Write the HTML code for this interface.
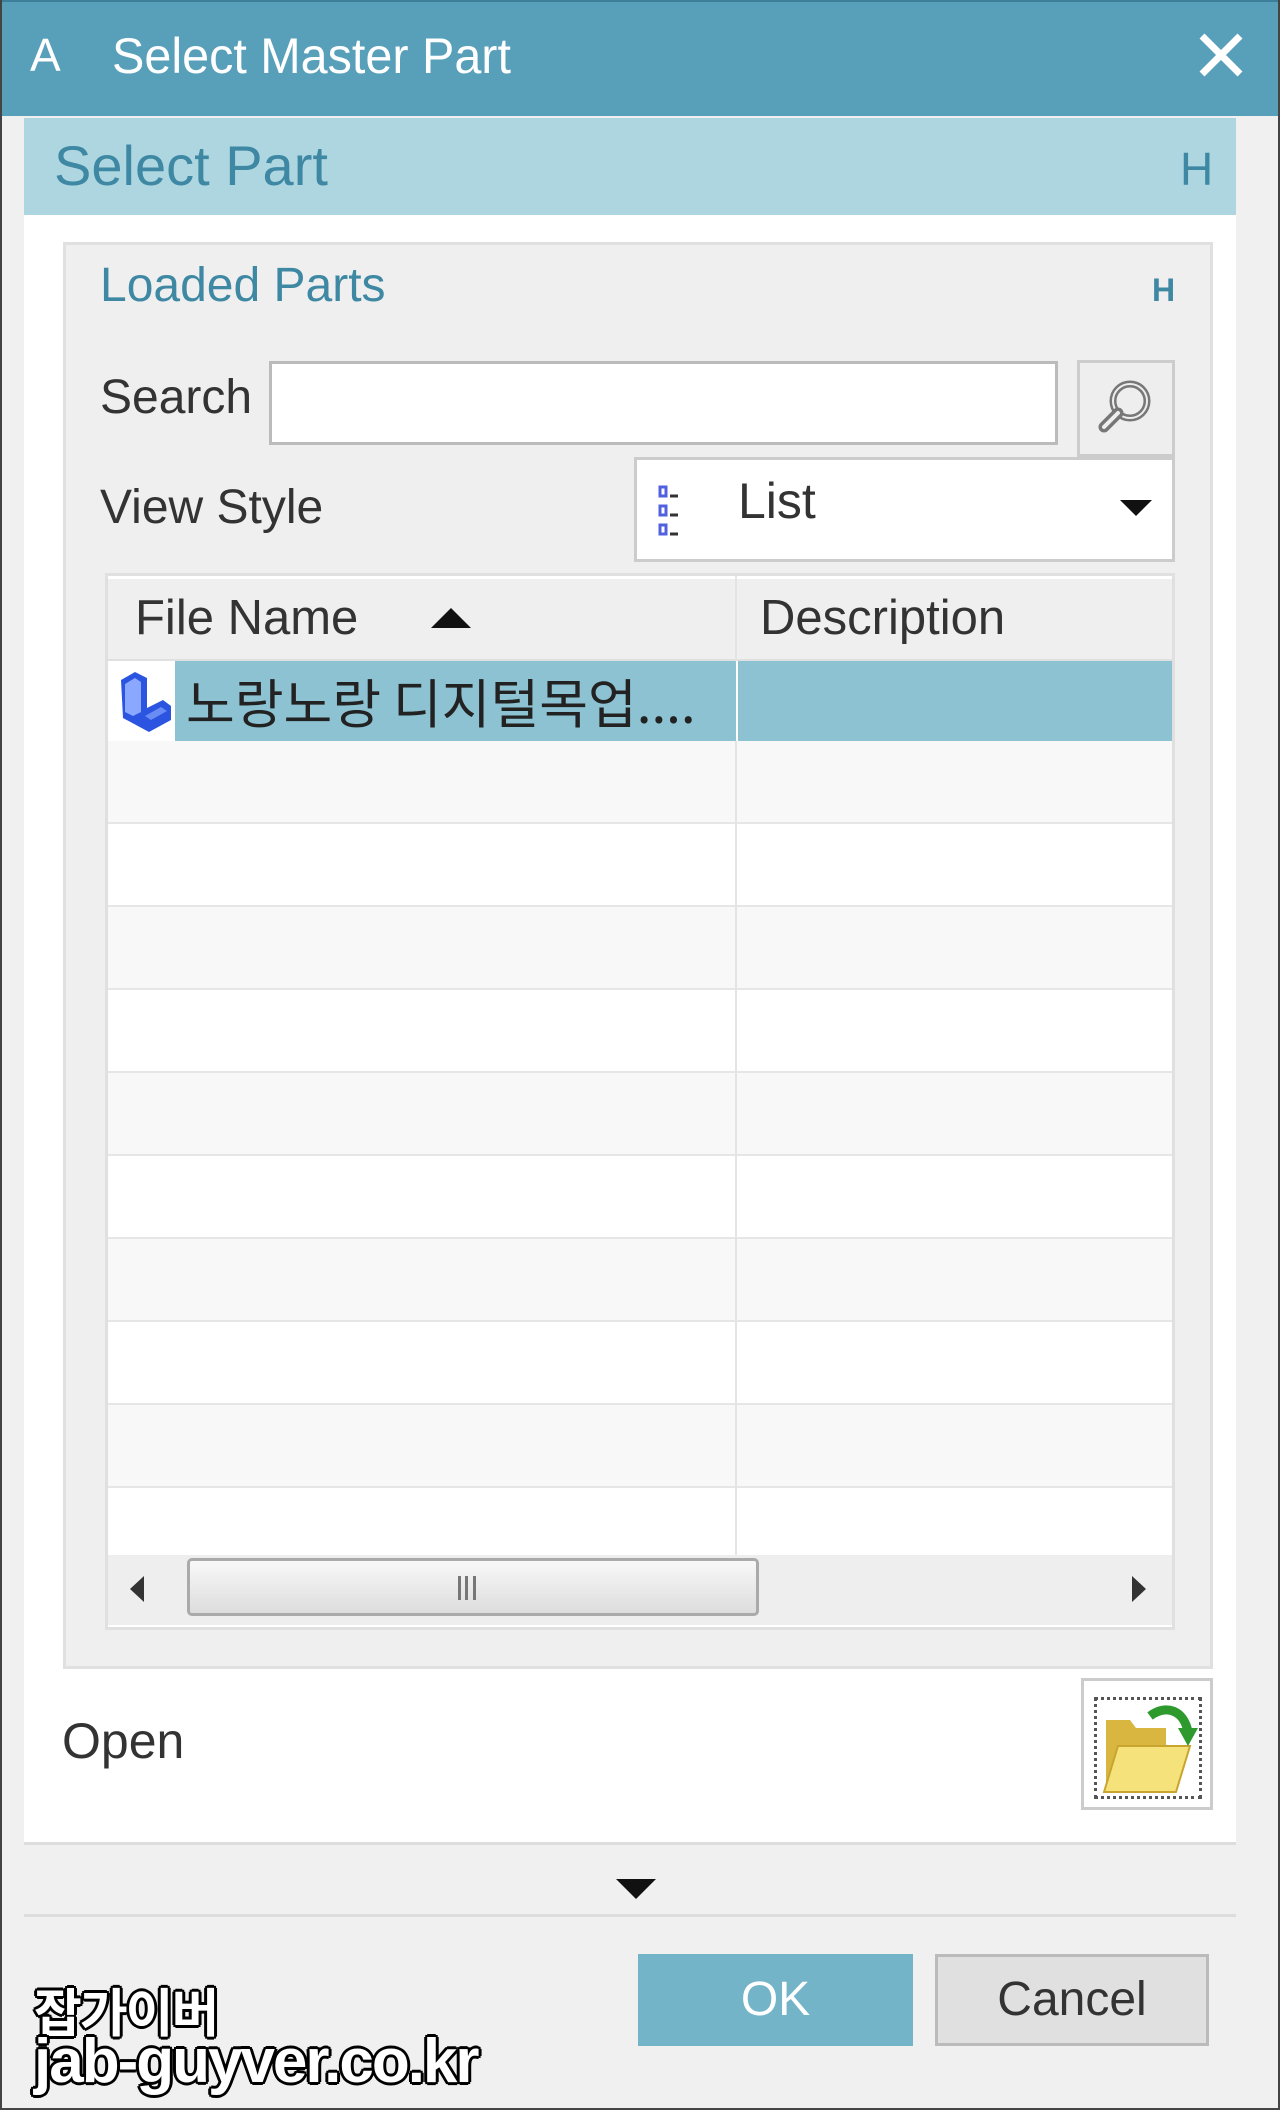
<!DOCTYPE html>
<html><head><meta charset="utf-8"><style>
*{margin:0;padding:0;box-sizing:border-box}
body{width:1280px;height:2110px;overflow:hidden;background:#f0f0f0;font-family:"Liberation Sans","Noto Sans CJK KR",sans-serif;position:relative}
.a{position:absolute}
.frame{left:0;top:0;width:1280px;height:2110px;border:2px solid #444;border-top:none}
.title{left:0;top:0;width:1280px;height:116px;background:#589fba;border-top:2px solid #3d7f99}
.t{color:#fff;font-size:50px}
.rows div{position:absolute;left:0;width:1065px;height:83px;border-bottom:2px solid #e6e6e6}
</style></head><body>
<div class="a title"></div>
<div class="a t" style="left:30px;top:28px;font-size:46px">A</div>
<div class="a t" style="left:112px;top:27px;transform:scaleX(0.97);transform-origin:left">Select Master Part</div>
<svg class="a" style="left:1196px;top:30px" width="50" height="50"><path d="M6 6L44 44M44 6L6 44" stroke="#fff" stroke-width="7"/></svg>
<div class="a" style="left:24px;top:118px;width:1212px;height:97px;background:#aed6e0"></div>
<div class="a" style="left:54px;top:133px;font-size:56px;color:#3e88a3">Select Part</div>
<div class="a" style="left:1180px;top:142px;font-size:46px;color:#3e88a3">H</div>
<div class="a" style="left:24px;top:215px;width:1212px;height:1630px;background:#fff;border-bottom:3px solid #ddd"></div>
<div class="a" style="left:63px;top:242px;width:1150px;height:1427px;background:#efefef;border:3px solid #e0e0e0"></div>
<div class="a" style="left:100px;top:258px;font-size:48px;color:#3e88a3">Loaded Parts</div>
<div class="a" style="left:1152px;top:272px;font-size:32px;color:#3e88a3;font-weight:bold">H</div>
<div class="a" style="left:100px;top:370px;font-size:48px;color:#333">Search</div>
<div class="a" style="left:269px;top:361px;width:789px;height:84px;background:#fff;border:3px solid #bbb"></div>
<div class="a" style="left:1077px;top:360px;width:98px;height:97px;background:#eee;border:3px solid #ccc"></div>
<svg class="a" style="left:1090px;top:375px" width="70" height="70"><circle cx="40" cy="26" r="17" fill="none" stroke="#777" stroke-width="7"/><circle cx="40" cy="26" r="17" fill="none" stroke="#eee" stroke-width="2"/><path d="M28 38L14 52" stroke="#777" stroke-width="11" stroke-linecap="round"/><path d="M28 38L14 52" stroke="#eee" stroke-width="4" stroke-linecap="round"/></svg>
<div class="a" style="left:100px;top:480px;font-size:48px;color:#333">View Style</div>
<div class="a" style="left:634px;top:457px;width:541px;height:105px;background:#fff;border:3px solid #ccc"></div>
<svg class="a" style="left:658px;top:484px" width="32" height="56"><g fill="none" stroke="#5060e0" stroke-width="3"><rect x="2" y="3" width="6" height="9"/><rect x="2" y="22" width="6" height="9"/><rect x="2" y="41" width="6" height="9"/></g><g stroke="#333" stroke-width="3"><path d="M12 12h8M12 31h8M12 50h8"/></g></svg>
<div class="a" style="left:738px;top:472px;font-size:50px;color:#333">List</div>
<svg class="a" style="left:1120px;top:498px" width="32" height="20"><path d="M0 2h32L16 18z" fill="#111"/></svg>
<div class="a" style="left:105px;top:573px;width:1070px;height:1057px;background:#fff;border:3px solid #e0e0e0;overflow:hidden">
 <div class="a" style="left:0;top:3px;width:1070px;height:82px;background:#efefef;border-bottom:2px solid #e0e0e0"></div>
 <div class="a" style="left:27px;top:14px;font-size:49px;color:#333">File Name</div>
 <svg class="a" style="left:323px;top:30px" width="40" height="24"><path d="M0 22h40L20 2z" fill="#111"/></svg>
 <div class="a" style="left:627px;top:0;width:2px;height:980px;background:#e4e4e4"></div>
 <div class="a" style="left:652px;top:14px;font-size:49px;color:#333">Description</div>
 <div class="a" style="left:67px;top:85px;width:1000px;height:80px;background:#8cc2d2"></div>
 <div class="a" style="left:628px;top:85px;width:2px;height:80px;background:#fff"></div>
 <svg class="a" style="left:5px;top:94px" width="60" height="62"><path d="M8 10l14-8 12 6v30l16-8 8 6v14l-22 12-26-14z" fill="#2b55e0"/><path d="M12 14l10-6 6 4v30l-8 4-8-4z" fill="#8aa8ff"/><path d="M32 46l16-9 6 4-16 9z" fill="#6a8cf5"/></svg>
 <div class="a" style="left:78px;top:92px;font-size:53px;color:#222;font-family:'Noto Sans CJK KR',sans-serif;line-height:66px;white-space:nowrap">노랑노랑 디지털목업....</div>
 <div class="rows">
  <div style="top:165px;background:#f8f8f8"></div><div style="top:248px"></div><div style="top:331px;background:#f8f8f8"></div><div style="top:414px"></div><div style="top:497px;background:#f8f8f8"></div><div style="top:580px"></div><div style="top:663px;background:#f8f8f8"></div><div style="top:746px"></div><div style="top:829px;background:#f8f8f8"></div><div style="top:912px;height:70px;border:none"></div>
 </div>
 <div class="a" style="left:627px;top:165px;width:2px;height:815px;background:#e4e4e4"></div>
 <div class="a" style="left:0;top:979px;width:1070px;height:70px;background:#eee"></div>
 <svg class="a" style="left:22px;top:1000px" width="16" height="26"><path d="M14 0v26L0 13z" fill="#333"/></svg>
 <svg class="a" style="left:1022px;top:1000px" width="16" height="26"><path d="M2 0v26L16 13z" fill="#333"/></svg>
 <div class="a" style="left:79px;top:982px;width:572px;height:58px;border:3px solid #aaa;border-radius:5px;background:linear-gradient(#f8f8f8,#ddd)"></div>
 <div class="a" style="left:350px;top:1000px;width:18px;height:24px;border-left:3px solid #777;border-right:3px solid #777"><div style="margin-left:4px;width:3px;height:24px;background:#777"></div></div>
</div>
<div class="a" style="left:62px;top:1712px;font-size:50px;color:#333">Open</div>
<div class="a" style="left:1081px;top:1678px;width:132px;height:132px;background:#fff;border:3px solid #ccc"></div>
<div class="a" style="left:1094px;top:1697px;width:108px;height:102px;border:3px dotted #555"></div>
<svg class="a" style="left:1100px;top:1700px" width="100" height="95"><path d="M6 20h24l6 8h30v60H6z" fill="#d8b640"/><path d="M4 92l14-46h72L76 92z" fill="#f5e27a" stroke="#c9a530" stroke-width="2"/><path d="M50 16c16-12 34-6 38 16" fill="none" stroke="#2e9a2e" stroke-width="9"/><path d="M78 28l20 0-10 18z" fill="#2e9a2e"/></svg>
<div class="a" style="left:24px;top:1914px;width:1212px;height:3px;background:#ddd"></div>
<svg class="a" style="left:616px;top:1877px" width="40" height="24"><path d="M0 2h40L20 22z" fill="#111"/></svg>
<div class="a" style="left:638px;top:1954px;width:275px;height:92px;background:#74b4c8;color:#fff;font-size:48px;text-align:center;line-height:92px">OK</div>
<div class="a" style="left:935px;top:1954px;width:274px;height:92px;background:#e0e0e0;border:3px solid #bbb;color:#333;font-size:48px;text-align:center;line-height:86px">Cancel</div>
<div class="a" style="left:34px;top:1982px;font-size:52px;font-weight:bold;color:#fff;text-shadow:-3px 0 #000,3px 0 #000,0 -3px #000,0 3px #000,-2px -2px #000,2px 2px #000,-2px 2px #000,2px -2px #000;font-family:'Noto Sans CJK KR',sans-serif;line-height:56px;letter-spacing:-2px">잡가이버</div>
<div class="a" style="left:34px;top:2032px;font-size:62px;font-weight:bold;color:#fff;text-shadow:-3px 0 #000,3px 0 #000,0 -3px #000,0 3px #000,-2px -2px #000,2px 2px #000,-2px 2px #000,2px -2px #000;font-family:'Liberation Sans',sans-serif;line-height:60px;letter-spacing:-2px">jab-guyver.co.kr</div>
<div class="a frame"></div>
</body></html>
